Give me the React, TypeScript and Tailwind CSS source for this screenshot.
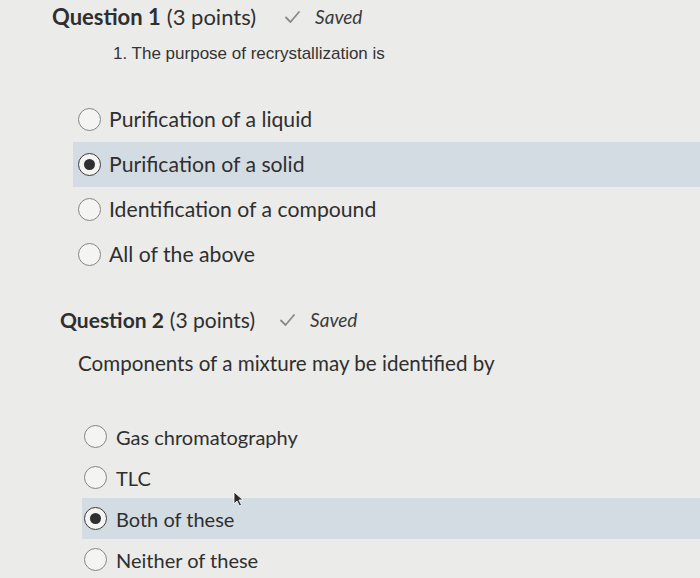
import React from "react";

type Opt = { label: string; selected?: boolean };

const q1: Opt[] = [
  { label: "Purification of a liquid" },
  { label: "Purification of a solid", selected: true },
  { label: "Identification of a compound" },
  { label: "All of the above" },
];

const q2: Opt[] = [
  { label: "Gas chromatography" },
  { label: "TLC" },
  { label: "Both of these", selected: true },
  { label: "Neither of these" },
];

const Radio = ({ selected }: { selected?: boolean }) => (
  <span
    className={`flex h-[23px] w-[23px] shrink-0 items-center justify-center rounded-full border-[1.5px] bg-[#f4f4f3] ${
      selected ? "border-[#3a3a3a]" : "border-[#858585]"
    }`}
  >
    {selected && <span className="h-[11px] w-[11px] rounded-full bg-[#2f2f2f]" />}
  </span>
);

const Check = () => (
  <svg width="17" height="14" viewBox="0 0 17 14" fill="none">
    <path d="M2 7.5 L6.5 12 L15 2" stroke="#8a8a8a" strokeWidth="1.8" strokeLinecap="round" strokeLinejoin="round" />
  </svg>
);

const Header = ({ n, className, gap }: { n: number; className: string; gap: string }) => (
  <div className={`flex items-center text-[#2f2f2f] ${className}`}>
    <span className="font-bold">Question {n}</span>
    <span className="ml-[6px]">(3 points)</span>
    <span className={`flex items-center ${gap}`}>
      <Check />
    </span>
    <span className="ml-[14px] text-[19px] italic text-[#3a3a3a]">Saved</span>
  </div>
);

export default function App() {
  return (
    <div
      className="relative h-[578px] w-[700px] overflow-hidden bg-[#ebebe9]"
      style={{ fontFamily: "Lato, 'Liberation Sans', sans-serif" }}
    >
      <Header n={1} gap="ml-[28px]" className="pl-[52px] pt-[4px] text-[22px] leading-[26px]" />
      <div
        className="mt-[14px] pl-[113px] text-[17px] leading-[20px] text-[#333]"
        style={{ fontFamily: "'Liberation Sans', Arial, sans-serif" }}
      >
        1. The purpose of recrystallization is
      </div>

      <div className="mt-[33px] flex flex-col">
        {q1.map((o) => (
          <div
            key={o.label}
            className={`ml-[73px] flex h-[45px] items-center gap-[8px] pl-[5px] text-[21.2px] text-[#2f2f2f] ${
              o.selected ? "bg-[#d4dce3]" : ""
            }`}
          >
            <Radio selected={o.selected} />
            <span>{o.label}</span>
          </div>
        ))}
      </div>

      <Header n={2} gap="ml-[24px]" className="mt-[31px] pl-[60px] text-[21px] leading-[24px]" />
      <div className="mt-[19px] pl-[78px] text-[20.6px] leading-[24px] text-[#2f2f2f]">
        Components of a mixture may be identified by
      </div>

      <div className="mt-[41px] flex flex-col">
        {q2.map((o) => (
          <div
            key={o.label}
            className={`ml-[82px] flex h-[41px] items-center gap-[9px] pl-[2px] text-[20px] text-[#2f2f2f] ${
              o.selected ? "bg-[#d4dce3]" : ""
            }`}
          >
            <Radio selected={o.selected} />
            <span>{o.label}</span>
          </div>
        ))}
      </div>

      <svg className="absolute left-[233px] top-[491px]" width="12" height="16" viewBox="0 0 12 16">
        <path d="M1 1 L1 13 L4 10 L6.5 15 L8.5 14 L6 9 L10 9 Z" fill="#2a2a2a" stroke="#fff" strokeWidth="0.8" />
      </svg>
    </div>
  );
}
